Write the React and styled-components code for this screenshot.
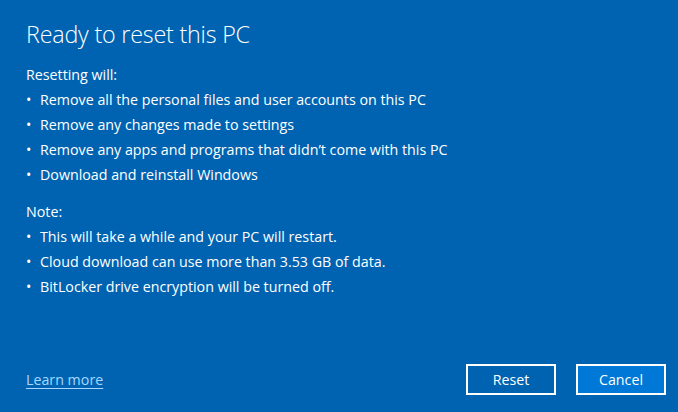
import React from 'react';
import styled, { createGlobalStyle } from 'styled-components';

const GlobalStyle = createGlobalStyle`
	html, body {
		margin: 0;
		padding: 0;
		background: #0063b1;
	}
	* {
		box-sizing: border-box;
	}
`;

const Dialog = styled.div`
	width: 678px;
	height: 412px;
	background: #0063b1;
	color: #ffffff;
	font-family: 'Segoe UI', 'Open Sans', 'Noto Sans', sans-serif;
	display: flex;
	flex-direction: column;
	padding: 18px 12px 17px 26px;
`;

const Title = styled.h1`
	margin: 0 0 12px;
	font-size: 23.3px;
	font-weight: 300;
	line-height: 32px;
	letter-spacing: -0.2px;
`;

const Section = styled.section`
	margin-bottom: ${(props) => props.gap || 0}px;
`;

const Heading = styled.div`
	font-size: 14.25px;
	line-height: 25px;
`;

const List = styled.ul`
	list-style: none;
	margin: 0;
	padding: 0;
`;

const Item = styled.li`
	display: flex;
	font-size: 14.25px;
	line-height: 25px;

	&::before {
		content: '•';
		width: 14px;
		flex-shrink: 0;
	}
`;

const Footer = styled.footer`
	margin-top: auto;
	display: flex;
	align-items: center;
	justify-content: space-between;
`;

const Link = styled.a`
	color: #a6d8ff;
	font-size: 14.25px;
	text-decoration: underline;
	text-underline-offset: 3px;
	cursor: pointer;
`;

const Buttons = styled.div`
	display: flex;
	gap: 20px;
`;

const Button = styled.button`
	width: 90px;
	height: 31px;
	border: 2px solid #ffffff;
	background: ${(props) => (props.primary ? '#0078d7' : 'transparent')};
	color: #ffffff;
	font-family: inherit;
	font-size: 14.25px;
	padding: 0;
`;

const resetting = [
	'Remove all the personal files and user accounts on this PC',
	'Remove any changes made to settings',
	'Remove any apps and programs that didn\u2019t come with this PC',
	'Download and reinstall Windows'
];

const notes = [
	'This will take a while and your PC will restart.',
	'Cloud download can use more than 3.53 GB of data.',
	'BitLocker drive encryption will be turned off.'
];

export default function App() {
	return (
		<>
			<GlobalStyle />
			<Dialog>
				<Title>Ready to reset this PC</Title>

				<Section gap={12}>
					<Heading>Resetting will:</Heading>
					<List>
						{resetting.map((text) => (
							<Item key={text}>{text}</Item>
						))}
					</List>
				</Section>

				<Section>
					<Heading>Note:</Heading>
					<List>
						{notes.map((text) => (
							<Item key={text}>{text}</Item>
						))}
					</List>
				</Section>

				<Footer>
					<Link>Learn more</Link>
					<Buttons>
						<Button>Reset</Button>
						<Button primary>Cancel</Button>
					</Buttons>
				</Footer>
			</Dialog>
		</>
	);
}
